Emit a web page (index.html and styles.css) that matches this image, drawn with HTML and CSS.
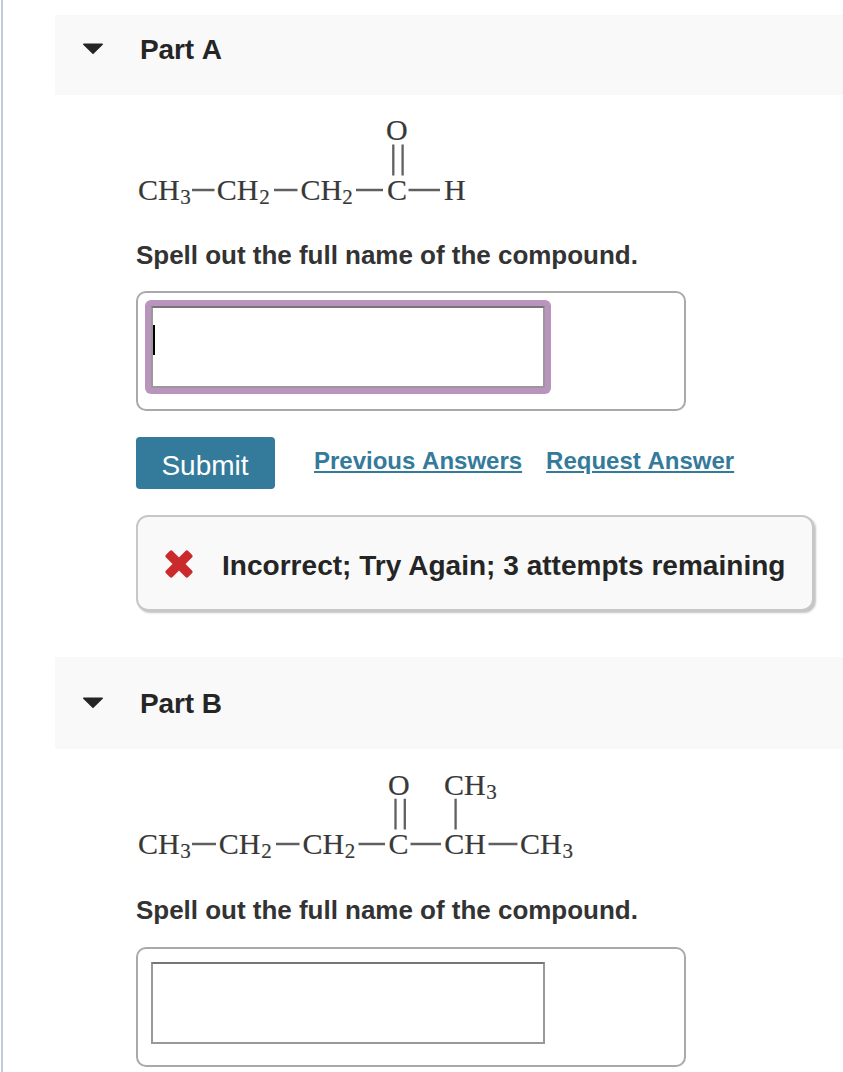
FILE: index.html
```html
<!DOCTYPE html>
<html lang="en">
<head>
<meta charset="utf-8">
<title>Compound names</title>
<link rel="stylesheet" href="styles.css">
</head>
<body>
<main class="page">
  <section class="part">
    <header class="part-header part-header-a">
      <svg class="toggle" width="22" height="12" viewBox="0 0 22 12"><path d="M1.8 1.2H20.2L11 10.2Z"/></svg>
      <h2 class="part-title">Part A</h2>
    </header>
    <div class="part-body">
      <svg class="formula" width="340" height="100" viewBox="136 110 340 100">
        <text x="138" y="200">CH</text><text class="sub" x="180.3" y="204">3</text>
        <text x="216.8" y="200">CH</text><text class="sub" x="259.3" y="204">2</text>
        <text x="300.5" y="200">CH</text><text class="sub" x="342.3" y="204">2</text>
        <text x="387" y="200">C</text><text x="444" y="200">H</text><text x="386" y="140">O</text>
        <path d="M192 190H214.5M274 190H297.5M356 190H383M408.5 190H440M393.3 144.5V175.5M402.6 144.5V175.5"/>
      </svg>
      <p class="prompt">Spell out the full name of the compound.</p>
      <div class="answer">
        <div class="focus-ring"><div class="field"><span class="cursor"></span></div></div>
      </div>
      <div class="actions">
        <button class="submit" type="button">Submit</button>
        <nav class="links"><a class="link" href="#">Previous Answers</a><a class="link" href="#">Request Answer</a></nav>
      </div>
      <div class="feedback">
        <svg class="cross" width="28" height="28" viewBox="-14 -14 28 28">
          <rect x="-15.7" y="-4.6" width="31.4" height="9.2" rx="2" transform="rotate(45)"/>
          <rect x="-15.7" y="-4.6" width="31.4" height="9.2" rx="2" transform="rotate(-45)"/>
        </svg>
        <span class="feedback-text">Incorrect; Try Again; 3 attempts remaining</span>
      </div>
    </div>
  </section>
  <section class="part">
    <header class="part-header part-header-b">
      <svg class="toggle" width="22" height="12" viewBox="0 0 22 12"><path d="M1.8 1.2H20.2L11 10.2Z"/></svg>
      <h2 class="part-title">Part B</h2>
    </header>
    <div class="part-body">
      <svg class="formula" width="450" height="101" viewBox="136 764 450 101">
        <text x="138" y="854">CH</text><text class="sub" x="180.3" y="858">3</text>
        <text x="218.8" y="854">CH</text><text class="sub" x="261.3" y="858">2</text>
        <text x="302.5" y="854">CH</text><text class="sub" x="344.8" y="858">2</text>
        <text x="388.5" y="854">C</text><text x="444.3" y="854">CH</text>
        <text x="520" y="854">CH</text><text class="sub" x="562.5" y="858">3</text>
        <text x="388" y="794.5">O</text><text x="444" y="794.5">CH</text><text class="sub" x="486.3" y="798.5">3</text>
        <path d="M192 844H216M276 844H299.5M358.5 844H385M410.5 844H441M488.5 844H517.5M395.5 798.7V829.5M404.8 798.7V829.5M455.6 798.7V829.5"/>
      </svg>
      <p class="prompt">Spell out the full name of the compound.</p>
      <div class="answer answer-b">
        <div class="field"></div>
      </div>
    </div>
  </section>
</main>
</body>
</html>
```
FILE: styles.css
```css
* { box-sizing: border-box; }
body {
  margin: 0;
  background: #fff;
  color: #252525;
  font-family: "Liberation Sans", Arial, sans-serif;
}
.page {
  height: 1072px;
  margin-left: 1px;
  padding: 15px 0 0 52px;
  border-left: 2px solid #c0cde0;
  overflow: hidden;
}
.part-header {
  display: flex;
  align-items: flex-start;
  padding-left: 27px;
  background: #f9f9f9;
}
.part-header-a { height: 80px; padding-top: 19px; }
.part-header-b { height: 92px; padding-top: 31px; }
.toggle { margin-top: 9px; fill: #252525; stroke: #252525; stroke-width: 1.6; stroke-linejoin: round; }
.part-title {
  margin: 0 0 0 36px;
  font-size: 28px;
  line-height: 32px;
  font-weight: 700;
  letter-spacing: -0.1px;
  font-kerning: none;
}
.part-body { padding: 15px 0 0 81px; }
.formula {
  display: block;
  font-family: "Liberation Serif", "Times New Roman", serif;
  font-size: 30px;
  fill: #383838;
  stroke: #383838;
  stroke-width: 0.2;
}
.formula .sub { font-size: 21px; }
.formula path { fill: none; stroke: #606060; stroke-width: 2.3; }
.prompt {
  margin: 30px 0 21px;
  color: #333;
  font-size: 26px;
  line-height: 30px;
  font-weight: 700;
  letter-spacing: -0.02px;
}
.answer {
  width: 550px;
  height: 120px;
  padding: 7px;
  border: 2px solid #a9a9a9;
  border-radius: 10px;
}
.answer-b { padding: 13px; }
.prompt:has(+ .answer-b) { margin-bottom: 22px; }
.focus-ring { width: 406px; padding: 6px; border-radius: 6px; background: #b995be; }
.field {
  width: 394px;
  height: 82px;
  padding-top: 17px;
  border: 2px solid #999;
  border-top-color: #767676;
  background: #fff;
}
.cursor { display: block; width: 2px; height: 30px; background: #000; }
.actions { display: flex; gap: 39px; margin-top: 26px; }
.submit {
  width: 139px;
  height: 52px;
  padding: 6px 1px 0 0;
  border: 0;
  border-radius: 4px;
  background: #337a9b;
  color: #fff;
  font: 28px/32px "Liberation Sans", Arial, sans-serif;
}
.links { display: flex; gap: 24px; padding-top: 10px; }
.link {
  color: #337a9b;
  font-size: 24px;
  line-height: 28px;
  font-weight: 700;
  font-kerning: none;
  white-space: nowrap;
  text-decoration-thickness: 1.5px;
  text-underline-offset: 2px;
}
.feedback {
  display: flex;
  align-items: center;
  gap: 29px;
  width: 678px;
  height: 96px;
  margin: 26px 0 46px;
  padding: 2px 0 0 27px;
  border: 2px solid #c7c7c7;
  border-radius: 12px;
  background: #f9f9f9;
  box-shadow: 2px 2px 2px #c4c4c4;
}
.cross { flex: none; fill: #cb2a2d; }
.feedback-text {
  padding-top: 3px;
  font-size: 28px;
  line-height: 32px;
  font-weight: 700;
  letter-spacing: 0.03px;
  white-space: nowrap;
}
```
